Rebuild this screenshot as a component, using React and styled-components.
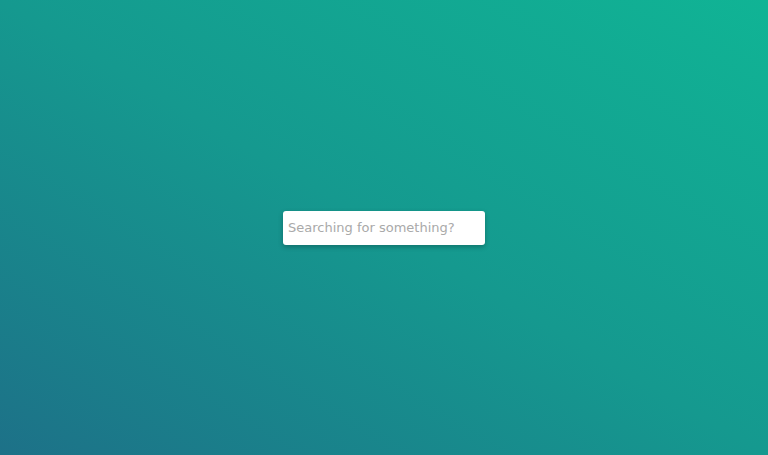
import React from 'react';
import styled, { createGlobalStyle } from 'styled-components';

const Global = createGlobalStyle`
  html, body { margin: 0; padding: 0; height: 100%; }
  #root { height: 100%; }
`;

const Page = styled.div`
  height: 100vh;
  display: flex;
  align-items: center;
  justify-content: center;
  background: linear-gradient(to top right, #1d7188 0%, #15998f 50%, #10b495 100%);
`;

const SearchInput = styled.input`
  box-sizing: border-box;
  width: 202px;
  height: 34px;
  padding: 0 5px;
  border: none;
  border-radius: 3px;
  background: #fff;
  box-shadow: 0 2px 5px rgba(0, 0, 0, 0.25);
  font-family: "DejaVu Sans", sans-serif;
  font-size: 13px;
  color: #555;
  outline: none;
  &::placeholder { color: #a9a9a9; }
`;

export default function App() {
  return (
    <>
      <Global />
      <Page>
        <SearchInput placeholder="Searching for something?" />
      </Page>
    </>
  );
}
